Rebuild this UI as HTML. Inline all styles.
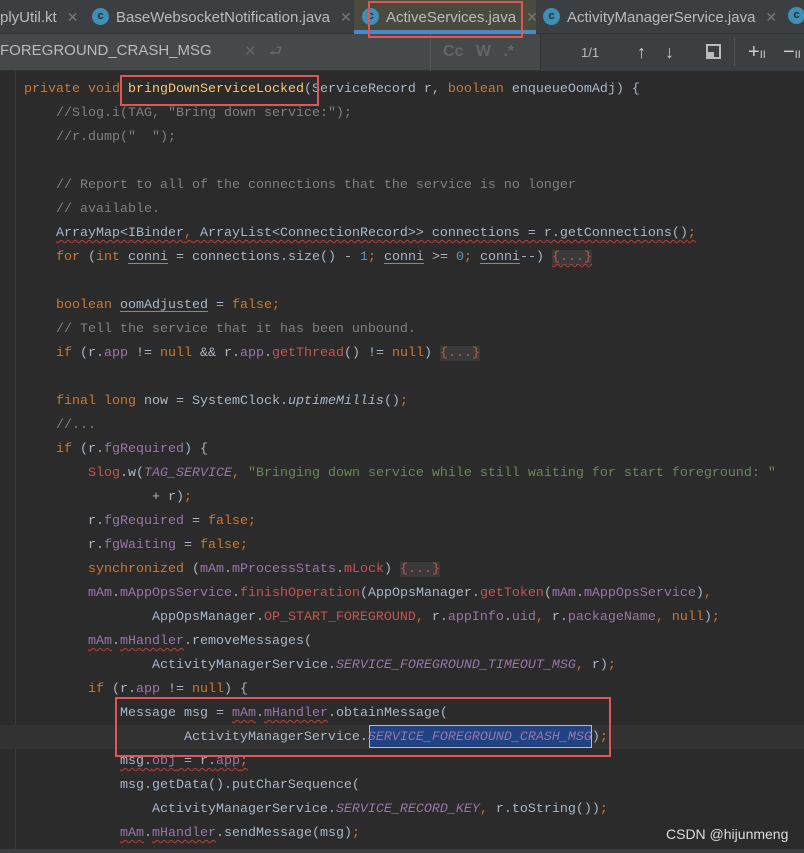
<!DOCTYPE html>
<html><head><meta charset="utf-8">
<style>
*{margin:0;padding:0;box-sizing:border-box}
body{width:804px;height:853px;overflow:hidden;background:#2b2b2b;position:relative;font-family:"Liberation Sans",sans-serif}
.tabs{position:absolute;left:0;top:0;width:804px;height:34px;background:#3c3f41;border-bottom:1px solid #323232}
.tab{position:absolute;top:0;height:34px;color:#bbbbbb;font-size:15px;line-height:34px;white-space:nowrap}
.ic{display:inline-block;width:17px;height:17px;border-radius:50%;background:#3d8fb5;color:#2b2b2b;font-size:11px;font-weight:bold;text-align:center;line-height:17px;vertical-align:middle;margin-right:7px;margin-top:-3px}
.x{color:#777;margin-left:10px;font-size:14px}
.search{position:absolute;left:0;top:34px;width:804px;height:37px;background:#45494a;border-bottom:1px solid #323232}
.sr{position:absolute;left:540px;top:0;width:264px;height:37px;background:#3c3f41;border-left:1px solid #323232}
pre{position:absolute;left:0;top:78px;font-family:"Liberation Mono",monospace;font-size:13.33px;line-height:24px;color:#a9b7c6;white-space:pre}
.k{color:#cc7832}.s{color:#6a8759}.c{color:#808080}.f{color:#9876aa}.fi{color:#9876aa;font-style:italic}.m{color:#ffc66d}.r{color:#c75450}.n{color:#6897bb}.i{font-style:italic}
.w{text-decoration:underline wavy #bc3f3c;text-decoration-thickness:1px;text-underline-offset:3px}
.u{text-decoration:underline #6f8fa8;text-underline-offset:3px}
.fold{color:#c75450;background:#3a3a3a}
.box{position:absolute;border:2.5px solid #e05555}
</style></head><body>
<div class="tabs">
<div class="tab" style="left:0">plyUtil.kt<span class="x">✕</span></div>
<div class="tab" style="left:92px"><span class="ic">c</span>BaseWebsocketNotification.java<span class="x">✕</span></div>
<div class="tab" style="left:354px;width:182px;background:#4b4a3f;padding-left:8px"><span class="ic">c</span>ActiveServices.java<span class="x">✕</span><div style="position:absolute;left:0;bottom:0;width:182px;height:4px;background:#4a88c7"></div></div>
<div class="tab" style="left:543px"><span class="ic">c</span>ActivityManagerService.java<span class="x">✕</span></div>
<div class="tab" style="left:788px"><span class="ic">c</span></div>
</div>
<div class="search">
<div style="position:absolute;left:0;top:0;line-height:34px;color:#bbb;font-size:15px">FOREGROUND_CRASH_MSG</div>
<div style="position:absolute;left:244px;top:0;line-height:36px;color:#666;font-size:15px">✕&nbsp;&nbsp;&nbsp;⮐</div>
<div style="position:absolute;left:430px;top:0;width:1px;height:37px;background:#555"></div>
<div style="position:absolute;left:443px;top:0;line-height:36px;color:#666;font-size:16px;font-weight:bold;word-spacing:8px">Cc W .*</div>
<div class="sr">
<div style="position:absolute;left:40px;top:0;line-height:37px;color:#bbb;font-size:13px">1/1</div>
<div style="position:absolute;left:96px;top:0;line-height:36px;color:#ccc;font-size:18px;word-spacing:14px">↑ ↓</div>
<div style="position:absolute;left:165px;top:10px;width:15px;height:15px;border:2px solid #bbb"><div style="position:absolute;left:0;bottom:0;width:6px;height:5px;background:#bbb"></div></div>
<div style="position:absolute;left:193px;top:4px;width:1px;height:28px;background:#555"></div>
<div style="position:absolute;left:207px;top:0;line-height:36px;color:#ccc;font-size:20px">+<span style="font-size:11px">II</span></div>
<div style="position:absolute;left:242px;top:0;line-height:36px;color:#ccc;font-size:20px">−<span style="font-size:11px">II</span></div>
</div>
</div>
<div style="position:absolute;left:15px;top:71px;width:1px;height:782px;background:#3a3a3a"></div>
<div style="position:absolute;left:0;top:725px;width:804px;height:24px;background:#323232"></div>
<div style="position:absolute;left:369px;top:725px;width:223px;height:23px;background:#214283;border:1px solid #bbb"></div>
<pre>   <span class="k">private void</span> <span class="m">bringDownServiceLocked</span>(ServiceRecord r, <span class="k">boolean</span> enqueueOomAdj) {
       <span class="c">//Slog.i(TAG, "Bring down service:");</span>
       <span class="c">//r.dump("  ");</span>

       <span class="c">// Report to all of the connections that the service is no longer</span>
       <span class="c">// available.</span>
       <span class="w">ArrayMap&lt;IBinder<span class="k">,</span> ArrayList&lt;ConnectionRecord&gt;&gt; connections = r.getConnections()<span class="k">;</span></span>
       <span class="k">for</span> (<span class="k">int</span> <span class="u">conni</span> = connections.size() - <span class="n">1</span><span class="k">;</span> <span class="u">conni</span> &gt;= <span class="n">0</span><span class="k">;</span> <span class="u">conni</span>--) <span class="fold w">{...}</span>

       <span class="k">boolean</span> <span class="u">oomAdjusted</span> = <span class="k">false;</span>
       <span class="c">// Tell the service that it has been unbound.</span>
       <span class="k">if</span> (r.<span class="f">app</span> != <span class="k">null</span> &amp;&amp; r.<span class="f">app</span>.<span class="r">getThread</span>() != <span class="k">null</span>) <span class="fold">{...}</span>

       <span class="k">final long</span> now = SystemClock.<span class="i">uptimeMillis</span>()<span class="k">;</span>
       <span class="c">//...</span>
       <span class="k">if</span> (r.<span class="f">fgRequired</span>) {
           <span class="r">Slog</span>.w(<span class="fi">TAG_SERVICE</span><span class="k">,</span> <span class="s">"Bringing down service while still waiting for start foreground: "</span>
                   + r)<span class="k">;</span>
           r.<span class="f">fgRequired</span> = <span class="k">false;</span>
           r.<span class="f">fgWaiting</span> = <span class="k">false;</span>
           <span class="k">synchronized</span> (<span class="f">mAm</span>.<span class="f">mProcessStats</span>.<span class="r">mLock</span>) <span class="fold">{...}</span>
           <span class="f">mAm</span>.<span class="f">mAppOpsService</span>.<span class="r">finishOperation</span>(AppOpsManager.<span class="r">getToken</span>(<span class="f">mAm</span>.<span class="f">mAppOpsService</span>)<span class="k">,</span>
                   AppOpsManager.<span class="r">OP_START_FOREGROUND</span><span class="k">,</span> r.<span class="f">appInfo</span>.<span class="f">uid</span><span class="k">,</span> r.<span class="f">packageName</span><span class="k">, null</span>)<span class="k">;</span>
           <span class="f w">mAm</span>.<span class="f w">mHandler</span>.removeMessages(
                   ActivityManagerService.<span class="fi">SERVICE_FOREGROUND_TIMEOUT_MSG</span><span class="k">,</span> r)<span class="k">;</span>
           <span class="k">if</span> (r.<span class="f">app</span> != <span class="k">null</span>) {
               Message msg = <span class="f w">mAm</span>.<span class="f w">mHandler</span>.obtainMessage(
                       ActivityManagerService.<span class="fi">SERVICE_FOREGROUND_CRASH_MSG</span>)<span class="k">;</span>
               <span class="w">msg.<span class="f">obj</span> = r.<span class="f">app</span><span class="k">;</span></span>
               msg.getData().putCharSequence(
                   ActivityManagerService.<span class="fi">SERVICE_RECORD_KEY</span><span class="k">,</span> r.toString())<span class="k">;</span>
               <span class="f w">mAm</span>.<span class="f w">mHandler</span>.sendMessage(msg)<span class="k">;</span>
</pre>
<div class="box" style="left:368px;top:1px;width:155px;height:37px"></div>
<div class="box" style="left:120px;top:75px;width:199px;height:31px"></div>
<div class="box" style="left:115px;top:697px;width:496px;height:60px"></div>
<div style="position:absolute;left:666px;top:826px;color:#ddd;font-size:14px">CSDN @hijunmeng</div>
<div style="position:absolute;left:0;top:849px;width:804px;height:4px;background:#3c3f41"></div>
</body></html>
